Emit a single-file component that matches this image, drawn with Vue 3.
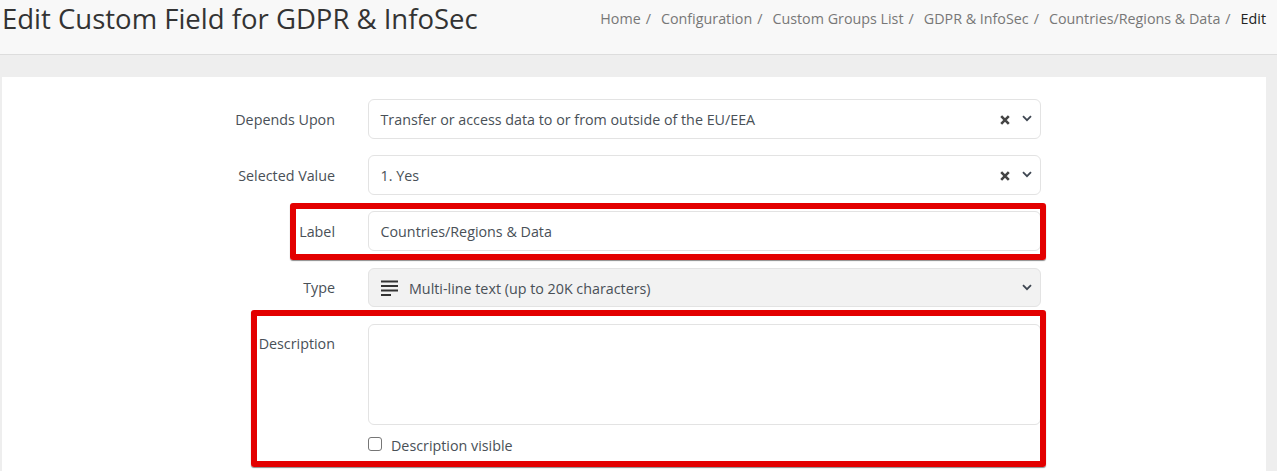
<script setup>
const crumbs = ['Home', 'Configuration', 'Custom Groups List', 'GDPR & InfoSec', 'Countries/Regions & Data']
</script>

<template>
  <div class="page">
    <header class="head">
      <h1 class="title">Edit Custom Field for GDPR &amp; InfoSec</h1>
      <nav class="crumbs">
        <span v-for="c in crumbs" :key="c" class="crumb">{{ c }}<i class="sep">/</i></span>
        <b class="now">Edit</b>
      </nav>
    </header>
    <main class="card">
      <form class="form" @submit.prevent>
        <div class="row">
          <label class="lab">Depends Upon</label>
          <div class="ctl sel">
            <span class="val">Transfer or access data to or from outside of the EU/EEA</span>
            <svg class="x" width="10" height="10" viewBox="0 0 10 10"><path d="M1.2 1.2l7.6 7.6M8.8 1.2l-7.6 7.6" stroke="#444" stroke-width="2.6" fill="none"/></svg>
            <svg class="chev" width="10" height="7" viewBox="0 0 10 7"><path d="M1 1.2l4 4 4-4" stroke="#3f4752" stroke-width="1.8" fill="none"/></svg>
          </div>
        </div>
        <div class="row">
          <label class="lab">Selected Value</label>
          <div class="ctl sel">
            <span class="val">1. Yes</span>
            <svg class="x" width="10" height="10" viewBox="0 0 10 10"><path d="M1.2 1.2l7.6 7.6M8.8 1.2l-7.6 7.6" stroke="#444" stroke-width="2.6" fill="none"/></svg>
            <svg class="chev" width="10" height="7" viewBox="0 0 10 7"><path d="M1 1.2l4 4 4-4" stroke="#3f4752" stroke-width="1.8" fill="none"/></svg>
          </div>
        </div>
        <div class="row">
          <label class="lab">Label</label>
          <div class="ctl sel"><span class="val">Countries/Regions &amp; Data</span></div>
        </div>
        <div class="row type">
          <label class="lab">Type</label>
          <div class="ctl sel dis">
            <svg class="lines" width="17" height="16" viewBox="0 0 17 16"><path d="M0 1.5h17M0 6h17M0 10.5h17M0 15h10" stroke="#333" stroke-width="2" fill="none"/></svg>
            <span class="val shift">Multi-line text (up to 20K characters)</span>
            <svg class="chev" width="10" height="7" viewBox="0 0 10 7"><path d="M1 1.2l4 4 4-4" stroke="#3f4752" stroke-width="1.8" fill="none"/></svg>
          </div>
        </div>
        <div class="row desc">
          <label class="lab">Description</label>
          <div class="stack">
            <div class="ctl area"></div>
            <label class="check"><span class="box"></span>Description visible</label>
          </div>
        </div>
      </form>
      <div class="mark mark-label"></div>
      <div class="mark mark-desc"></div>
    </main>
  </div>
</template>

<style>
html, body { margin: 0; overflow: hidden; background: #eee; }
</style>

<style scoped>
.page { height: 471px; overflow: hidden; background: #eee; font-family: "Open Sans", "Noto Sans", sans-serif; font-size: 14.3px; color: #495057; }
.head { height: 54px; background: #f8f8f8; border-bottom: 1px solid #ddd; display: flex; justify-content: space-between; align-items: flex-start; padding: 0 11px 0 2px; }
.title { margin: 0; font-size: 27.5px; font-weight: 400; line-height: 38px; color: #333; }
.crumbs { display: flex; line-height: 20px; margin-top: 9px; color: #777; }
.crumb { white-space: pre; }
.sep { font-style: normal; margin: 0 10px 0 5px; color: #777; }
.now { font-weight: 400; color: #222; padding-right: 0; }
.card { position: relative; margin: 22px 11px 0 2px; background: #fff; height: 400px; }
.form { padding-top: 22px; display: flex; flex-direction: column; }
.row { display: grid; grid-template-columns: 333px 673px; column-gap: 33px; margin-bottom: 16px; }
.row.type { margin-top: 1px; margin-bottom: 17px; }
.lab { text-align: right; height: 38px; line-height: 42px; color: #495057; }
.type .lab { line-height: 40px; }
.desc .lab { line-height: 40px; }
.ctl { box-sizing: border-box; border: 1px solid #e3e3e3; border-radius: 6px; background: #fff; }
.sel { height: 40px; display: flex; align-items: center; padding: 0 8.5px 0 11.5px; }
.type .sel { height: 39px; }
.dis { background: #f2f2f2; }
.val { flex: 1; color: #495057; }
.shift { padding-top: 1px; }
.x { margin-right: 12px; margin-top: 1px; }
.chev { margin-top: -1px; }
.lines { margin-left: 0.5px; margin-right: 11px; }
.area { height: 101px; }
.check { display: flex; align-items: center; margin-top: 11px; line-height: 20px; }
.box { box-sizing: border-box; width: 14px; height: 14px; border: 1px solid #767676; border-radius: 3px; background: #fff; margin-right: 9px; margin-top: -5px; }
.mark { position: absolute; box-sizing: border-box; border: 6px solid #e30000; border-radius: 3px; box-shadow: 0 1px 1px rgba(0,0,0,.45); }
.mark-label { left: 288px; top: 126px; width: 756px; height: 57px; }
.mark-desc { left: 249px; top: 233px; width: 795px; height: 157px; }
</style>
